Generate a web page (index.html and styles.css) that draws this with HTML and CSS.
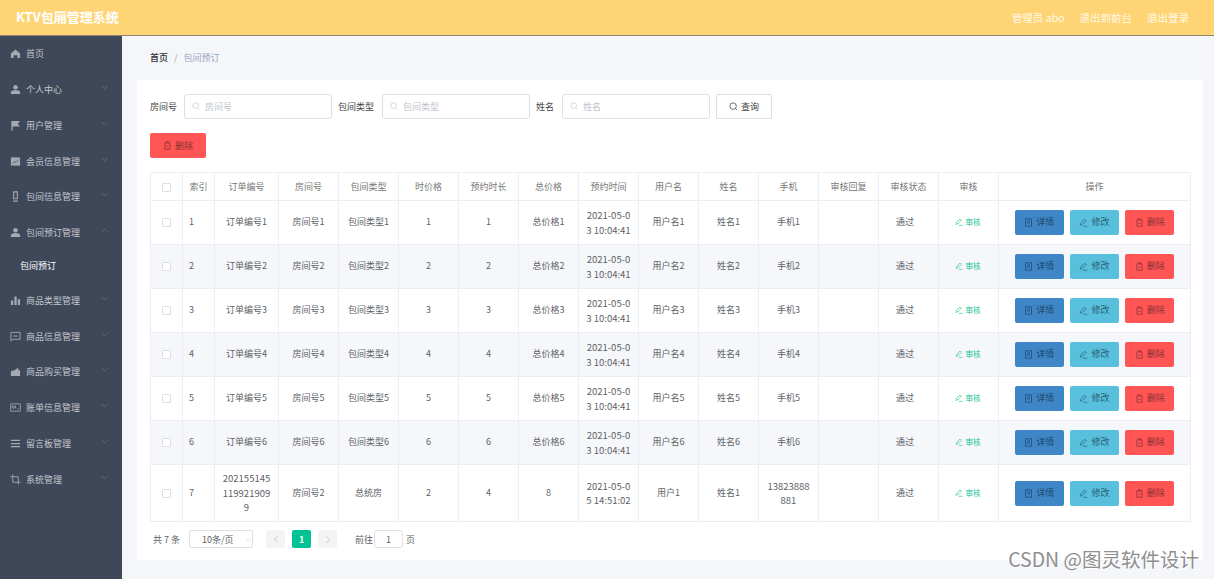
FILE: index.html
```html
<!DOCTYPE html>
<html lang="zh">
<head>
<meta charset="utf-8">
<title>KTV包厢管理系统</title>
<link rel="stylesheet" href="styles.css">
</head>
<body>
<svg class="defs" width="0" height="0" aria-hidden="true">
  <symbol id="chev" viewBox="0 0 10 6"><path d="M1 1l4 4 4-4" fill="none" stroke="currentColor" stroke-width=".8"/></symbol>
  <symbol id="search" viewBox="0 0 12 12"><circle cx="5.500" cy="5.500" r="4.300" fill="none" stroke="currentColor"/><path d="M8.700 8.700l2.300 2.300" stroke="currentColor"/></symbol>
  <symbol id="trash" viewBox="0 0 12 12"><path d="M2.500 2.500h7v8.500h-7zM4.500 2.500v-1.500h3v1.500M4.500 7h3" fill="none" stroke="currentColor"/></symbol>
  <symbol id="doc" viewBox="0 0 12 12"><path d="M2 1h8v10h-8zM4 4h4M4 6.500h4" fill="none" stroke="currentColor"/></symbol>
  <symbol id="edit" viewBox="0 0 12 12"><path d="M7.500 1.500l2 2-5.500 5.500-2.500.5.500-2.500zM5.500 11h5.500" fill="none" stroke="currentColor"/></symbol>
</svg>
<header class="topbar">
  <div class="brand">KTV包厢管理系统</div>
  <nav class="toplinks"><span>管理员 abo</span><span>退出到前台</span><span>退出登录</span></nav>
</header>
<div class="shell">
  <aside class="sidebar">
    <div class="menu-item"><svg class="mi" viewBox="0 0 12 12"><path d="M6 1.500l5 4.500v5h-3v-3h-4v3h-3v-5z"/></svg><span>首页</span></div>
    <div class="menu-item"><svg class="mi" viewBox="0 0 12 12"><circle cx="6" cy="3.500" r="2.500"/><path d="M1 11v-2c0-1.500 2-2.500 5-2.500s5 1 5 2.500v2z"/></svg><span>个人中心</span><svg class="chev"><use href="#chev"/></svg></div>
    <div class="menu-item"><svg class="mi" viewBox="0 0 12 12"><path d="M1.500 1h9.500l-2.500 3 2.500 3h-8v4.500h-1.500z"/></svg><span>用户管理</span><svg class="chev"><use href="#chev"/></svg></div>
    <div class="menu-item"><svg class="mi" viewBox="0 0 12 12"><path d="M1 1.500h10v9h-10z"/><path d="M2.500 8.500l2.500-2.500 1.500 1 3-3" fill="none" stroke="#3f4859" stroke-width=".8"/></svg><span>会员信息管理</span><svg class="chev"><use href="#chev"/></svg></div>
    <div class="menu-item"><svg class="mi" viewBox="0 0 12 12"><path d="M4 1h4v7.500h-4zM3.500 11h5" fill="none" stroke="currentColor" stroke-width="1.200"/></svg><span>包间信息管理</span><svg class="chev"><use href="#chev"/></svg></div>
    <div class="menu-item"><svg class="mi" viewBox="0 0 12 12"><circle cx="6" cy="3.500" r="2.500"/><path d="M1 11v-2c0-1.500 2-2.500 5-2.500s5 1 5 2.500v2z"/></svg><span>包间预订管理</span><svg class="chev up"><use href="#chev"/></svg></div>
    <div class="sub-item">包间预订</div>
    <div class="menu-item"><svg class="mi" viewBox="0 0 12 12"><path d="M1 6h2.500v5h-2.500zM4.800 1.500h2.500v9.500h-2.500zM8.500 4.500h2.500v6.500h-2.500z"/></svg><span>商品类型管理</span><svg class="chev"><use href="#chev"/></svg></div>
    <div class="menu-item"><svg class="mi" viewBox="0 0 12 12"><path d="M1 1.500h10v7.500h-8l-2 2zM3.500 5.500h5" fill="none" stroke="currentColor"/></svg><span>商品信息管理</span><svg class="chev"><use href="#chev"/></svg></div>
    <div class="menu-item"><svg class="mi" viewBox="0 0 12 12"><path d="M1 5.500l4-1 4-3v3h2v6.500h-10z"/></svg><span>商品购买管理</span><svg class="chev"><use href="#chev"/></svg></div>
    <div class="menu-item"><svg class="mi" viewBox="0 0 12 12"><path d="M.8 2h10.400v8h-10.400zM2.500 4.500h3.500v2h-3.500zM8 7.500h1.500" fill="none" stroke="currentColor" stroke-width=".9"/></svg><span>账单信息管理</span><svg class="chev"><use href="#chev"/></svg></div>
    <div class="menu-item"><svg class="mi" viewBox="0 0 12 12"><path d="M1 2h10v1.300h-10zM1 5.400h10v1.300h-10zM1 8.800h10v1.300h-10z"/></svg><span>留言板管理</span><svg class="chev"><use href="#chev"/></svg></div>
    <div class="menu-item"><svg class="mi" viewBox="0 0 12 12"><path d="M3 .5v8.500h8.500M.5 3h8.500v8.500" fill="none" stroke="currentColor"/></svg><span>系统管理</span><svg class="chev"><use href="#chev"/></svg></div>
  </aside>
  <main class="main">
    <div class="crumbs"><b>首页</b><i>/</i><span>包间预订</span></div>
    <section class="card">
      <form class="filters">
        <label>房间号</label>
        <div class="input first"><svg class="ic"><use href="#search"/></svg>房间号</div>
        <label>包间类型</label>
        <div class="input"><svg class="ic"><use href="#search"/></svg>包间类型</div>
        <label>姓名</label>
        <div class="input"><svg class="ic"><use href="#search"/></svg>姓名</div>
        <div class="btn plain query"><svg class="ic"><use href="#search"/></svg>查询</div>
      </form>
      <div class="btn red top-del"><svg class="ic"><use href="#trash"/></svg>删除</div>
      <table class="grid">
        <colgroup>
          <col class="c-a"><col class="c-a"><col class="c-b"><col class="c-c"><col class="c-c"><col class="c-c"><col class="c-c"><col class="c-c"><col class="c-c"><col class="c-c"><col class="c-c"><col class="c-c"><col class="c-c"><col class="c-c"><col class="c-c"><col class="c-d">
        </colgroup>
        <thead>
          <tr><th><span class="check"></span></th><th>索引</th><th>订单编号</th><th>房间号</th><th>包间类型</th><th>时价格</th><th>预约时长</th><th>总价格</th><th>预约时间</th><th>用户名</th><th>姓名</th><th>手机</th><th>审核回复</th><th>审核状态</th><th>审核</th><th>操作</th></tr>
        </thead>
        <tbody>
          <tr><td><span class="check"></span></td><td class="idx">1</td><td>订单编号1</td><td>房间号1</td><td>包间类型1</td><td>1</td><td>1</td><td>总价格1</td><td class="date">2021-05-0<br>3 10:04:41</td><td>用户名1</td><td>姓名1</td><td>手机1</td><td></td><td class="status">通过</td><td class="audit"><svg class="ic"><use href="#edit"/></svg>审核</td><td><div class="ops"><div class="btn blue"><svg class="ic"><use href="#doc"/></svg>详情</div><div class="btn cyan"><svg class="ic"><use href="#edit"/></svg>修改</div><div class="btn red"><svg class="ic"><use href="#trash"/></svg>删除</div></div></td></tr>
          <tr><td><span class="check"></span></td><td class="idx">2</td><td>订单编号2</td><td>房间号2</td><td>包间类型2</td><td>2</td><td>2</td><td>总价格2</td><td class="date">2021-05-0<br>3 10:04:41</td><td>用户名2</td><td>姓名2</td><td>手机2</td><td></td><td class="status">通过</td><td class="audit"><svg class="ic"><use href="#edit"/></svg>审核</td><td><div class="ops"><div class="btn blue"><svg class="ic"><use href="#doc"/></svg>详情</div><div class="btn cyan"><svg class="ic"><use href="#edit"/></svg>修改</div><div class="btn red"><svg class="ic"><use href="#trash"/></svg>删除</div></div></td></tr>
          <tr><td><span class="check"></span></td><td class="idx">3</td><td>订单编号3</td><td>房间号3</td><td>包间类型3</td><td>3</td><td>3</td><td>总价格3</td><td class="date">2021-05-0<br>3 10:04:41</td><td>用户名3</td><td>姓名3</td><td>手机3</td><td></td><td class="status">通过</td><td class="audit"><svg class="ic"><use href="#edit"/></svg>审核</td><td><div class="ops"><div class="btn blue"><svg class="ic"><use href="#doc"/></svg>详情</div><div class="btn cyan"><svg class="ic"><use href="#edit"/></svg>修改</div><div class="btn red"><svg class="ic"><use href="#trash"/></svg>删除</div></div></td></tr>
          <tr><td><span class="check"></span></td><td class="idx">4</td><td>订单编号4</td><td>房间号4</td><td>包间类型4</td><td>4</td><td>4</td><td>总价格4</td><td class="date">2021-05-0<br>3 10:04:41</td><td>用户名4</td><td>姓名4</td><td>手机4</td><td></td><td class="status">通过</td><td class="audit"><svg class="ic"><use href="#edit"/></svg>审核</td><td><div class="ops"><div class="btn blue"><svg class="ic"><use href="#doc"/></svg>详情</div><div class="btn cyan"><svg class="ic"><use href="#edit"/></svg>修改</div><div class="btn red"><svg class="ic"><use href="#trash"/></svg>删除</div></div></td></tr>
          <tr><td><span class="check"></span></td><td class="idx">5</td><td>订单编号5</td><td>房间号5</td><td>包间类型5</td><td>5</td><td>5</td><td>总价格5</td><td class="date">2021-05-0<br>3 10:04:41</td><td>用户名5</td><td>姓名5</td><td>手机5</td><td></td><td class="status">通过</td><td class="audit"><svg class="ic"><use href="#edit"/></svg>审核</td><td><div class="ops"><div class="btn blue"><svg class="ic"><use href="#doc"/></svg>详情</div><div class="btn cyan"><svg class="ic"><use href="#edit"/></svg>修改</div><div class="btn red"><svg class="ic"><use href="#trash"/></svg>删除</div></div></td></tr>
          <tr><td><span class="check"></span></td><td class="idx">6</td><td>订单编号6</td><td>房间号6</td><td>包间类型6</td><td>6</td><td>6</td><td>总价格6</td><td class="date">2021-05-0<br>3 10:04:41</td><td>用户名6</td><td>姓名6</td><td>手机6</td><td></td><td class="status">通过</td><td class="audit"><svg class="ic"><use href="#edit"/></svg>审核</td><td><div class="ops"><div class="btn blue"><svg class="ic"><use href="#doc"/></svg>详情</div><div class="btn cyan"><svg class="ic"><use href="#edit"/></svg>修改</div><div class="btn red"><svg class="ic"><use href="#trash"/></svg>删除</div></div></td></tr>
          <tr><td><span class="check"></span></td><td class="idx">7</td><td class="date">202155145<br>119921909<br>9</td><td>房间号2</td><td>总统房</td><td>2</td><td>4</td><td>8</td><td class="date">2021-05-0<br>5 14:51:02</td><td>用户1</td><td>姓名1</td><td class="date">13823888<br>881</td><td></td><td class="status">通过</td><td class="audit"><svg class="ic"><use href="#edit"/></svg>审核</td><td><div class="ops"><div class="btn blue"><svg class="ic"><use href="#doc"/></svg>详情</div><div class="btn cyan"><svg class="ic"><use href="#edit"/></svg>修改</div><div class="btn red"><svg class="ic"><use href="#trash"/></svg>删除</div></div></td></tr>
        </tbody>
      </table>
      <div class="pager">
        <span class="total">共 7 条</span>
        <div class="size">10条/页<svg class="size-chev"><use href="#chev"/></svg></div>
        <div class="pg nav"><svg class="arrow prev"><use href="#chev"/></svg></div>
        <div class="pg on">1</div>
        <div class="pg nav"><svg class="arrow next"><use href="#chev"/></svg></div>
        <span class="goto">前往</span>
        <div class="jump">1</div>
        <span>页</span>
      </div>
    </section>
  </main>
</div>
<div class="watermark">CSDN @图灵软件设计</div>
</body>
</html>
```
FILE: styles.css
```css
* { box-sizing: border-box; }
html, body { margin: 0; height: 579px; overflow: hidden; }
body {
  position: relative;
  font-family: "Noto Sans CJK SC", "Open Sans", "Noto Sans", sans-serif;
  font-size: 9px;
  color: #606266;
  background: #f5f6f9;
}
.defs { position: absolute; }

.topbar {
  height: 36px;
  background: #ffd475;
  border-bottom: 1px solid #8c8570;
  display: flex;
  align-items: center;
  justify-content: space-between;
  padding: 0 25px 1px 16px;
  color: #fff;
}
.brand { font-size: 13px; font-weight: 700; line-height: 36px; }
.toplinks { display: flex; gap: 15px; font-size: 10.500px; color: #fff9e8; }

.shell { display: flex; height: 543px; }
.sidebar { width: 122px; flex: none; background: #3f4859; color: #c3c7ce; }
.menu-item {
  height: 35.750px;
  display: flex;
  align-items: center;
  padding: 0 14px 0 10px;
}
.menu-item span { flex: 1; margin-left: 5px; white-space: nowrap; }
.mi { width: 11px; height: 11px; fill: #a4a9b2; color: #a4a9b2; flex: none; }
.chev { width: 7px; height: 5px; color: #7f8794; flex: none; margin-bottom: 4px; }
.chev.up { transform: rotate(180deg); }
.sub-item { height: 32px; line-height: 30px; padding-left: 20px; color: #fff; }

.main { flex: 1; min-width: 0; padding: 0 11px 0 15px; }
.crumbs { height: 44px; display: flex; align-items: center; padding: 0 0 2px 13px; color: #97a8be; }
.crumbs b { color: #303133; font-weight: 500; }
.crumbs i { margin: 0 6px; font-style: normal; color: #97a8be; }
.card { background: #fff; height: 480px; padding: 14px 13px 0; }

.filters { display: flex; align-items: center; height: 24px; }
.filters label { color: #444; white-space: nowrap; }
.input {
  width: 148px;
  height: 25px;
  margin: 0 6px 0 8px;
  border: 1px solid #dcdfe6;
  border-radius: 3px;
  background: #fff;
  color: #c0c4cc;
  display: flex;
  align-items: center;
  padding-left: 7px;
}
.input.first { margin-left: 7px; }
.input .ic { margin-right: 5px; width: 8px; height: 8px; }
.ic { width: 9px; height: 9px; flex: none; margin-right: 3px; }

.btn {
  height: 25px;
  width: 49.330px;
  border-radius: 2px;
  display: flex;
  align-items: center;
  justify-content: center;
  color: #444;
  border: 1px solid transparent;
}
.plain { border-color: #dcdfe6; background: #fff; }
.query { width: 56px; }
.red { background: #ff5555; color: #8a3034; }
.blue { background: #3f86c6; color: #1f4a70; }
.cyan { background: #58bfdd; color: #2d6273; }
.top-del { width: 56px; margin-top: 15px; }

.grid {
  table-layout: fixed;
  border-collapse: collapse;
  width: 1040px;
  margin-top: 14px;
  border: 1px solid #ebeef5;
  text-align: center;
  line-height: 14.500px;
}
.c-a { width: 32px; }
.c-b { width: 64px; }
.c-c { width: 60px; }
.c-d { width: 192px; }
.grid th, .grid td { border: 1px solid #ebeef5; padding: 0; }
.grid th { height: 28px; font-weight: 400; color: #777; padding-top: 1px; }
.grid td { height: 44px; color: #606266; }
.grid tbody tr:nth-child(even) td { background: #f5f7fa; }
.grid tbody tr:last-child td { height: 57px; }
.grid .idx { text-align: left; padding-left: 6px; }
.grid .date { font-size: 9.500px; }
.grid .status { padding-right: 7px; }
.check {
  display: inline-block;
  width: 9px;
  height: 9px;
  border: 1px solid #dcdfe6;
  border-radius: 1px;
  background: #fff;
  vertical-align: middle;
}
.grid .audit { color: #21c197; font-size: 7.500px; white-space: nowrap; padding-right: 2px; }
.audit .ic { width: 8px; height: 8px; margin-right: 3px; vertical-align: -1px; }
.ops { display: flex; justify-content: center; gap: 6px; }

.pager { display: flex; align-items: center; height: 18px; margin-top: 8px; padding-left: 3px; color: #606266; }
.size {
  width: 64px;
  height: 18px;
  margin-left: 9px;
  border: 1px solid #dcdfe6;
  border-radius: 2px;
  display: flex;
  align-items: center;
  padding-left: 12px;
}
.size-chev { width: 7px; height: 5px; margin-left: 11px; color: #c0c4cc; }
.pg {
  width: 19px;
  height: 18px;
  margin-right: 7px;
  border-radius: 2px;
  display: flex;
  align-items: center;
  justify-content: center;
  font-weight: 700;
}
.nav { background: #f4f4f5; color: #b4b7bd; }
.size + .nav { margin-left: 13px; }
.arrow { width: 8px; height: 5px; }
.prev { transform: rotate(90deg); }
.next { transform: rotate(-90deg); }
.on { background: #00c292; color: #fff; }
.goto { margin-left: 11px; }
.jump {
  width: 29px;
  height: 18px;
  margin: 0 3px 0 1px;
  border: 1px solid #dcdfe6;
  border-radius: 3px;
  display: flex;
  align-items: center;
  justify-content: center;
}

.watermark {
  position: absolute;
  right: 15px;
  top: 547px;
  font-size: 19.500px;
  line-height: 24px;
  color: #8f8f8f;
  text-shadow: 1px 1px 1px #fff;
  white-space: nowrap;
}
```
